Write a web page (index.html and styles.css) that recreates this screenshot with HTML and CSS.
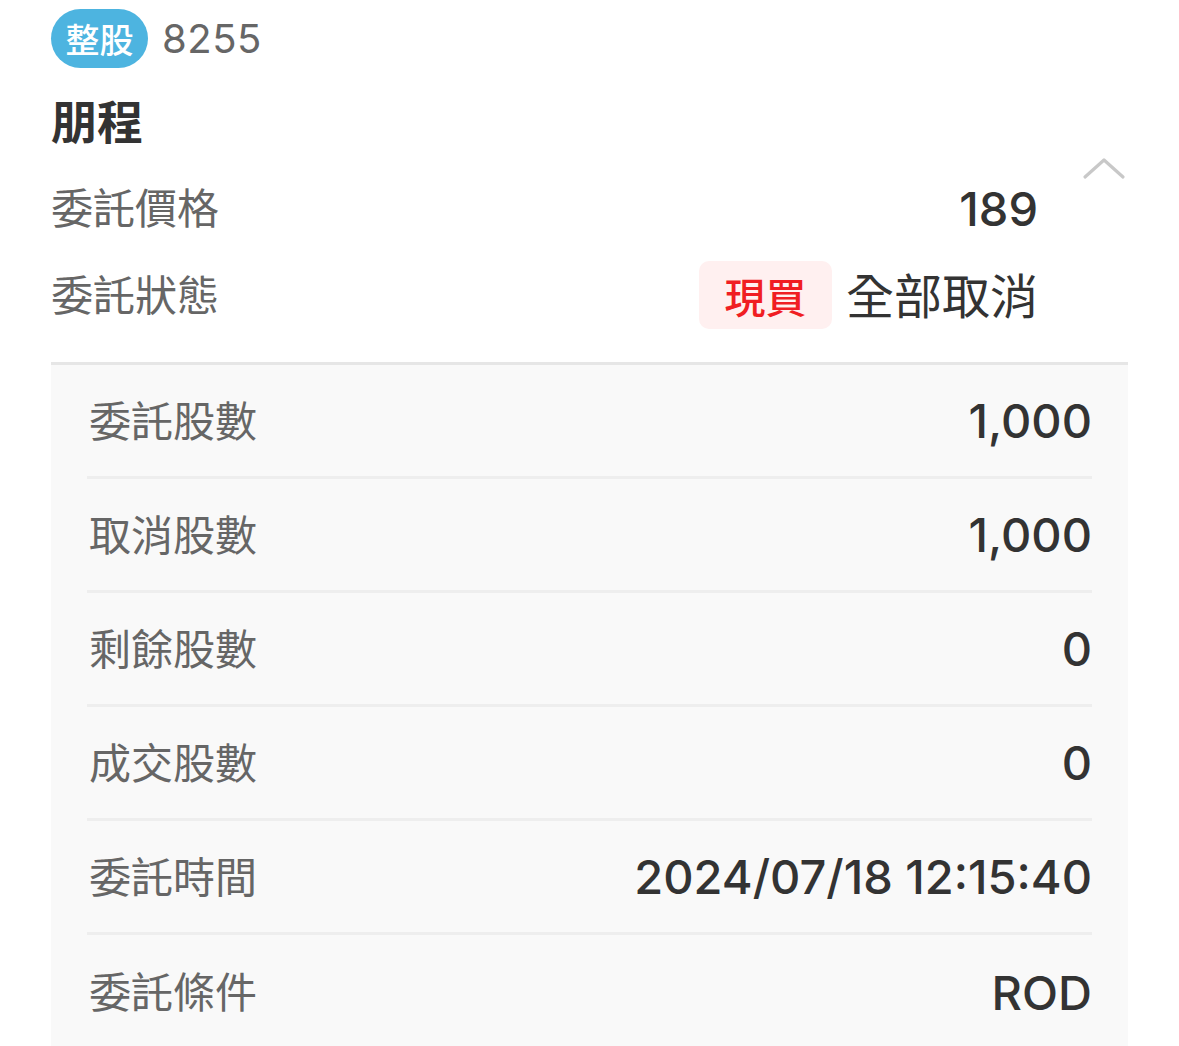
FILE: index.html
```html
<!DOCTYPE html>
<html lang="zh-Hant">
<head>
<meta charset="utf-8">
<link rel="stylesheet" href="styles.css">
</head>
<body>
<div class="card">
  <div class="head">
    <span class="badge">整股</span>
    <span class="code">8255</span>
  </div>
  <div class="name">朋程</div>
  <div class="summary">
    <svg class="chevron" width="44" height="24" viewBox="0 0 44 24"><path d="M3 20 L22 3 L41 20" fill="none" stroke="#c8c8c8" stroke-width="3.2" stroke-linecap="round" stroke-linejoin="round"/></svg>
    <div class="srow price">
      <span class="label">委託價格</span>
      <span class="value">189</span>
    </div>
    <div class="srow status">
      <span class="label">委託狀態</span>
      <span class="status-val"><span class="tag">現買</span><span class="value big">全部取消</span></span>
    </div>
  </div>
  <div class="panel">
    <div class="prow"><span class="plabel">委託股數</span><span class="pvalue">1,000</span></div>
    <div class="prow"><span class="plabel">取消股數</span><span class="pvalue">1,000</span></div>
    <div class="prow"><span class="plabel">剩餘股數</span><span class="pvalue">0</span></div>
    <div class="prow"><span class="plabel">成交股數</span><span class="pvalue">0</span></div>
    <div class="prow"><span class="plabel">委託時間</span><span class="pvalue">2024/07/18 12:15:40</span></div>
    <div class="prow last"><span class="plabel">委託條件</span><span class="pvalue">ROD</span></div>
  </div>
</div>
</body>
</html>
```
FILE: styles.css
```css
html, body {
  margin: 0;
  padding: 0;
  background: #ffffff;
}
body {
  font-family: Inter, "Noto Sans CJK TC", sans-serif;
  color: #333333;
  overflow: hidden;
}
.card {
  padding: 9px 51px 0 51px;
}
.head {
  display: flex;
  align-items: center;
  gap: 14px;
  height: 59px;
}
.badge {
  display: inline-flex;
  align-items: center;
  justify-content: center;
  height: 59px;
  width: 97px;
  border-radius: 30px;
  background: #4db4e0;
  color: #ffffff;
  font-size: 34px;
  font-weight: 500;
  font-family: "Noto Sans CJK TC", sans-serif;
}
.code {
  font-size: 40px;
  color: #666666;
  letter-spacing: 0.5px;
}
.name {
  font-family: "Noto Sans CJK TC", sans-serif;
  font-size: 46px;
  font-weight: 600;
  color: #333333;
  line-height: 60px;
  margin-top: 21px;
}
.summary {
  position: relative;
  padding-right: 90px;
  padding-bottom: 15px;
  border-bottom: 3px solid #e6e6e6;
}
.chevron {
  position: absolute;
  right: 2px;
  top: -16px;
}
.srow {
  display: flex;
  justify-content: space-between;
  align-items: center;
}
.srow.price {
  height: 70px;
  margin-top: 24px;
}
.srow.status {
  height: 104px;
}
.label {
  font-family: "Noto Sans CJK TC", sans-serif;
  font-size: 42px;
  color: #666666;
  padding-bottom: 5px;
}
.value {
  font-size: 47px;
  font-weight: 500;
  color: #333333;
}
.value.big {
  font-family: "Noto Sans CJK TC", sans-serif;
  font-size: 48px;
  font-weight: 400;
  padding-bottom: 4px;
}
.status-val {
  display: flex;
  align-items: center;
  gap: 14px;
}
.tag {
  display: inline-flex;
  align-items: center;
  justify-content: center;
  width: 133px;
  height: 68px;
  border-radius: 10px;
  background: #fff0f0;
  color: #f01e23;
  font-family: "Noto Sans CJK TC", sans-serif;
  font-size: 41px;
  font-weight: 500;
}
.panel {
  background: #f9f9f9;
  padding: 0 36px;
}
.prow {
  display: flex;
  justify-content: space-between;
  align-items: center;
  height: 111px;
  border-bottom: 3px solid #eeeeee;
}
.prow.last {
  border-bottom: none;
  height: 114px;
}
.plabel {
  font-family: "Noto Sans CJK TC", sans-serif;
  font-size: 42px;
  color: #666666;
  padding-left: 2px;
  padding-bottom: 5px;
}
.pvalue {
  font-size: 47px;
  font-weight: 500;
  color: #333333;
}
```
